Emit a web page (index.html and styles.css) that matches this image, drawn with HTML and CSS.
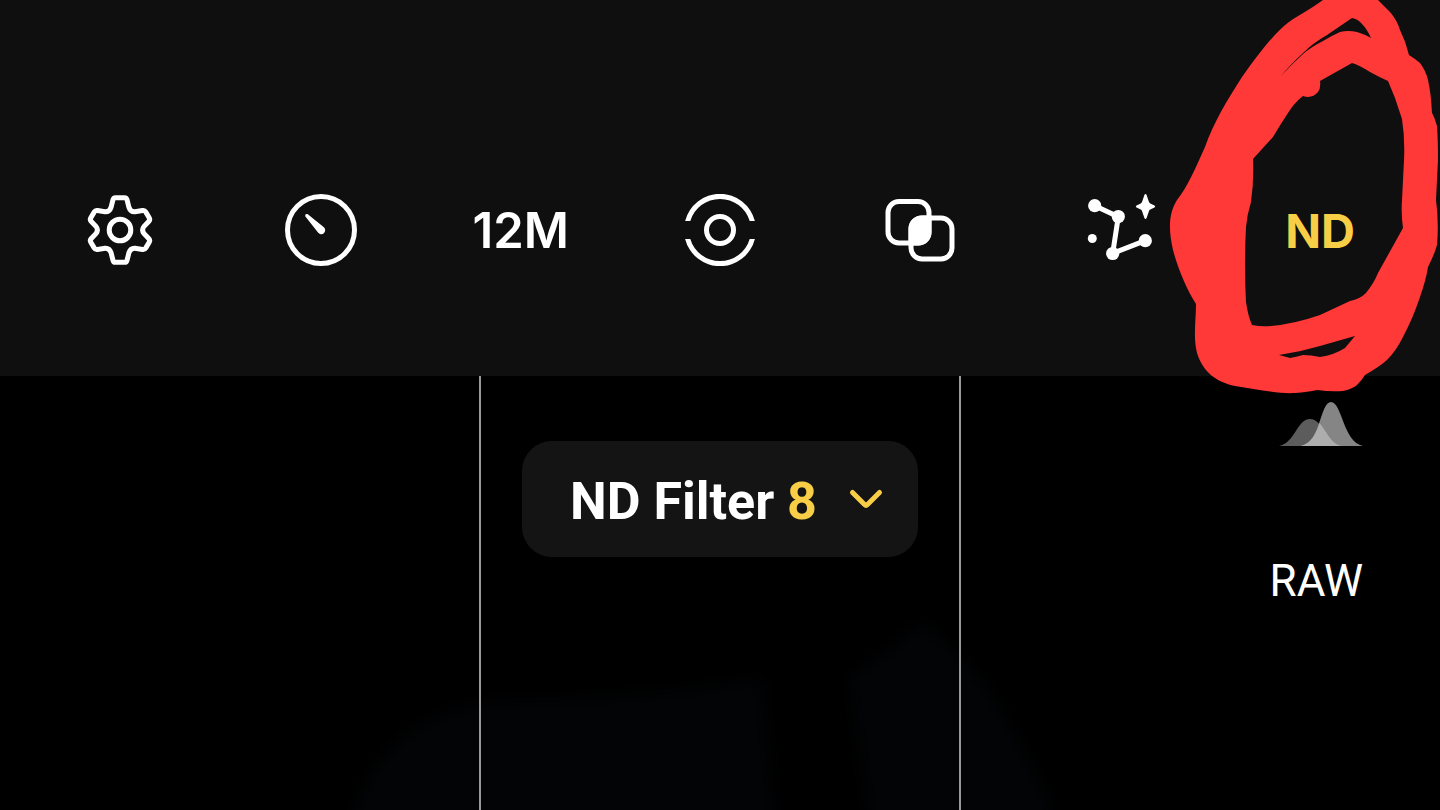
FILE: index.html
```
<!DOCTYPE html>
<html lang="en">
<head>
    <meta charset="utf-8">
    <title>Camera</title>
    <link rel="stylesheet" href="styles.css">
</head>
<body>
    <header class="toolbar">
        <button class="tool" aria-label="Settings">
            <svg class="icon" viewBox="1 0 72 72">
                <path d="M31.5 3.7h9q2 0 2.5 2l2 7.8q1.5 4.6 6 4.3l7.5-1.3q2.2-.4 3.2 1.4l3.6 6q1 1.8-.4 3.4l-4.8 5q-3 3.7 0 7.4l4.8 5q1.4 1.6.4 3.4l-3.6 6q-1 1.8-3.2 1.4l-7.5-1.3q-4.5-.3-6 4.3l-2 7.8q-.5 2-2.5 2h-9q-2 0-2.5-2l-2-7.8q-1.500-4.600-6-4.300l-7.500 1.300q-2.200.4-3.200-1.400l-3.600-6q-1-1.800.4-3.400l4.800-5q3-3.700 0-7.400l-4.800-5q-1.400-1.600-.4-3.400l3.600-6q1-1.800 3.200-1.400l7.500 1.300q4.500.3 6-4.300l2-7.800q.5-2 2.500-2z"/>
                <circle cx="36" cy="36" r="10.800"/>
            </svg>
        </button>
        <button class="tool" aria-label="Timer">
            <svg class="icon" viewBox="0 0 72 72">
                <circle cx="36" cy="36" r="33.500"/>
                <path class="solid" d="M20.200 22.300Q19.700 19.500 22.500 20L38.300 32.800A4 4 0 1 1 32.800 38.300Z"/>
            </svg>
        </button>
        <button class="tool tool-text">12M</button>
        <button class="tool" aria-label="Metering">
            <svg class="icon" viewBox="0 0 72 72">
                <path class="solid" d="M1.100 27A36 36 0 0 1 70.900 27H65.700A31 31 0 0 0 6.300 27Z"/>
                <path class="solid" d="M1.100 45A36 36 0 0 0 70.900 45H65.700A31 31 0 0 1 6.300 45Z"/>
                <circle cx="36" cy="36" r="13.500"/>
            </svg>
        </button>
        <button class="tool" aria-label="Multiple exposure">
            <svg class="icon" viewBox="0 0 72 72">
                <rect x="4" y="7.500" width="41" height="41.500" rx="11"/>
                <rect x="27" y="24" width="41" height="41" rx="11"/>
                <path class="solid" d="M37.500 21.500H47.500V38.500A13 13 0 0 1 34.500 51.500H24.500V34.500A13 13 0 0 1 37.500 21.500Z"/>
            </svg>
        </button>
        <button class="tool" aria-label="Astrophoto">
            <svg class="icon" viewBox="0 0 72 72">
                <path d="M10.700 11.700L34.300 22.700L28.700 59.300L61.300 46.700"/>
                <g class="solid">
                    <circle cx="10.700" cy="11.700" r="6.600"/>
                    <circle cx="34.300" cy="22.500" r="6.600"/>
                    <circle cx="28.700" cy="59.500" r="6.600"/>
                    <circle cx="61.300" cy="46.700" r="6.600"/>
                    <circle cx="8.300" cy="44.500" r="4.500"/>
                    <path d="M61.500 0Q62.300 0 62.600 1L65 8Q65.300 9 66.300 9.400L70.500 11.500Q72 12.500 70.500 13.500L66.300 15.600Q65.300 16 65 17L62.600 24Q61.500 26 60.400 24L58 17Q57.700 16 56.700 15.600L52.500 13.500Q51 12.500 52.500 11.500L56.700 9.400Q57.700 9 58 8L60.400 1Q60.700 0 61.500 0Z"/>
                </g>
            </svg>
        </button>
        <button class="tool tool-text tool-on active">ND</button>
    </header>

    <main class="viewfinder">
        <!-- dim scene seen through the lens -->
        <svg class="scene" viewBox="0 0 1440 434" preserveAspectRatio="none" aria-hidden="true">
            <filter id="soft" color-interpolation-filters="sRGB"><feGaussianBlur stdDeviation="8"/></filter>
            <g filter="url(#soft)">
                <path d="M350 450C370 370 430 330 500 325C600 322 680 318 762 302L775 450Z"/>
                <path d="M850 300Q900 270 920 245Q980 290 1010 350L1060 450H870Z"/>
            </g>
        </svg>
        <div class="cell"></div>
        <div class="grid-line"></div>
        <div class="cell cell-middle">
            <button class="filter-button">
                <span>ND Filter <span class="active">8</span></span>
                <svg class="chevron" viewBox="0 0 32 20" aria-hidden="true">
                    <path d="M2.500 1.500L14.500 13.500Q16 15 17.500 13.500L29.500 1.500"/>
                </svg>
            </button>
        </div>
        <div class="grid-line"></div>
        <div class="cell cell-right">
            <svg class="histogram" viewBox="0 0 84 44" role="img" aria-label="Histogram">
                <path fill="#5c5c5c" d="M0 44C16 41 18 17 31 17S46 41 62 44Z"/>
                <path fill="#858585" d="M22 44C42 40 41 0 52 0S64 40 84 44Z"/>
                <path fill="#adadad" d="M22 44C33 41 37 31 40.500 21C47 28 51 41 62 44Z"/>
            </svg>
            <button class="raw">RAW</button>
        </div>
    </main>

    <!-- hand-drawn circle round the ND button -->
    <svg class="marker" viewBox="0 0 280 400" aria-hidden="true">
        <path fill-rule="evenodd" d="M163 0C150 10 134 17 124 26C108 40 90 66 82 77C66 102 54 122 45 147C36 167 27 188 17 200C9 213 8 228 13 250C18 269 27 290 36 304C36 320 33 337 37 353C43 372 56 382 75 386C95 389 118 394 135 393Q148 392 157 390Q171 392 183 391Q192 389 197 385Q202 380 205 375Q219 367 227 360Q236 351 243 337Q253 318 260 297Q266 280 268 267Q275 253 277 245Q279 222 276 200L278 160Q278 140 277 126Q274 116 272 113Q271 93 268 80Q266 71 260 63Q254 58 249 55Q246 42 240 30Q237 20 230 12L218 0Z
            M192 63L160 81Q161 88 158 92Q152 99 143 96Q134 103 128 113Q120 125 113 137L93 159Q94 181 91 202Q87 215 86 227Q84 267 86 302Q88 316 92 325Q102 327 111 326Q134 324 160 315Q175 308 190 301Q200 299 206 293Q214 283 218 273L243 228Q241 214 242 200L244 160Q245 138 242 119L235 98L228 81Q219 77 210 72Q199 65 192 63Z
            M121 76Q130 65 143 53Q153 43 167 35L192 18Q198 19 202 24Q207 29 211 38Q204 34 197 32Q188 30 180 32Q171 36 163 41Q151 47 143 54Q131 65 121 76Z
            M119 355Q140 352 160 346L195 336L185 348Q174 355 160 357Q151 355 143 355Q136 357 130 358Z"/>
    </svg>
</body>
</html>
```

FILE: styles.css
```
* {
    box-sizing: border-box;
}
body {
    display: flex;
    flex-direction: column;
    position: relative;
    min-height: 100vh;
    margin: 0;
    background-color: #000;
    color: #fff;
    font-family: Roboto, sans-serif;
    overflow-x: hidden;
}
button {
    padding: 0;
    border: none;
    background: none;
    color: inherit;
    font-family: inherit;
    cursor: pointer;
}
.toolbar {
    display: grid;
    grid-template-columns: repeat(7, 1fr);
    padding: 194px 20px 110px 21px;
    background-color: #0f0f0f;
}
.tool {
    display: flex;
    align-items: center;
    justify-content: center;
    height: 72px;
}
.tool-text {
    font-family: Inter, sans-serif;
    font-size: 49px;
    font-weight: 600;
}
.tool-on {
    font-size: 47px;
    font-weight: 700;
}
.icon {
    width: 72px;
    height: 72px;
    fill: none;
    stroke: #fff;
    stroke-width: 5;
}
.icon .solid {
    fill: #fff;
    stroke: none;
}
.active {
    color: #f8ce46; /* yellow for the current setting */
}
.viewfinder {
    display: grid;
    grid-template-columns: 1fr 2px 1fr 2px 1fr;
    flex: 1;
    position: relative;
}
.scene {
    position: absolute;
    width: 100%;
    height: 100%;
    fill: #030406;
}
.cell {
    position: relative;
}
.cell-middle {
    padding-top: 65px;
}
.grid-line {
    position: relative;
    background-color: #999;
}
.filter-button {
    display: flex;
    align-items: center;
    justify-content: space-between;
    width: 396px;
    height: 116px;
    margin: 0 auto;
    padding: 4px 36px 0 48px;
    border-radius: 30px;
    background-color: #141414;
    font-size: 52px;
    font-weight: 700;
}
.chevron {
    width: 32px;
    height: 20px;
    fill: none;
    stroke: #f8ce46;
    stroke-width: 5;
    stroke-linecap: round;
    overflow: visible;
}
.cell-right {
    display: flex;
    flex-direction: column;
    align-items: flex-end;
    gap: 108px;
    padding: 26px 77px 0 0;
}
.histogram {
    width: 84px;
    height: 44px;
}
.raw {
    font-size: 44px;
    line-height: 54px;
}
.marker {
    position: absolute;
    top: 0;
    right: 0;
    width: 280px;
    height: 400px;
    fill: #ff3838;
    pointer-events: none;
}
```
